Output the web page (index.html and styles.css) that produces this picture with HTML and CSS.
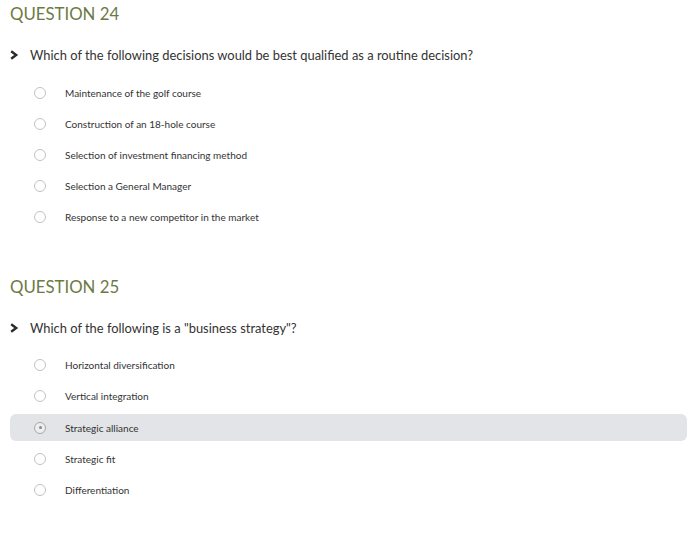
FILE: index.html
```html
<!DOCTYPE html>
<html>
<head>
<meta charset="utf-8">
<link rel="stylesheet" href="styles.css">
</head>
<body>
<div class="page">
  <section class="question">
    <h2 class="q-title">QUESTION 24</h2>
    <div class="q-text">
      <svg class="chev" width="10" height="10" viewBox="0 0 10 10"><path d="M2.2 1.2 L7.2 5 L2.2 8.8" fill="none" stroke="#2b2b2b" stroke-width="2.4" stroke-linejoin="miter"/></svg>
      <span>Which of the following decisions would be best qualified as a routine decision?</span>
    </div>
    <ul class="options">
      <li class="opt"><span class="radio"></span><span class="label">Maintenance of the golf course</span></li>
      <li class="opt"><span class="radio"></span><span class="label">Construction of an 18-hole course</span></li>
      <li class="opt"><span class="radio"></span><span class="label">Selection of investment financing method</span></li>
      <li class="opt"><span class="radio"></span><span class="label">Selection a General Manager</span></li>
      <li class="opt"><span class="radio"></span><span class="label">Response to a new competitor in the market</span></li>
    </ul>
  </section>
  <section class="question q2">
    <h2 class="q-title">QUESTION 25</h2>
    <div class="q-text">
      <svg class="chev" width="10" height="10" viewBox="0 0 10 10"><path d="M2.2 1.2 L7.2 5 L2.2 8.8" fill="none" stroke="#2b2b2b" stroke-width="2.4" stroke-linejoin="miter"/></svg>
      <span>Which of the following is a "business strategy"?</span>
    </div>
    <ul class="options">
      <li class="opt"><span class="radio"></span><span class="label">Horizontal diversification</span></li>
      <li class="opt"><span class="radio"></span><span class="label">Vertical integration</span></li>
      <li class="opt selected"><span class="radio checked"></span><span class="label">Strategic alliance</span></li>
      <li class="opt"><span class="radio"></span><span class="label">Strategic fit</span></li>
      <li class="opt"><span class="radio"></span><span class="label">Differentiation</span></li>
    </ul>
  </section>
</div>
</body>
</html>
```
FILE: styles.css
```css
html, body {
  margin: 0;
  padding: 0;
  background: #ffffff;
}
body {
  font-family: Lato, "Noto Sans", sans-serif;
  color: #333;
}
.page {
  padding: 2px 13px 0 10px;
}
.question {
  display: block;
}
.q2 {
  margin-top: 44px;
}
.q-title {
  margin: 0;
  font-weight: 400;
  font-size: 16.8px;
  line-height: 24px;
  color: #6d7a45;
  letter-spacing: 0;
}
.q-text {
  display: flex;
  align-items: center;
  margin-top: 20px;
  height: 18px;
  font-size: 12.9px;
  color: #333;
}
.chev {
  margin-left: -1px;
  width: 10px;
  height: 10px;
  flex: none;
}
.q-text span {
  margin-left: 11px;
}
.options {
  list-style: none;
  margin: 15px 0 0;
  padding: 0;
}
.opt {
  display: flex;
  align-items: center;
  height: 27px;
  margin-bottom: 4.2px;
  border-radius: 6px;
  padding-left: 24px;
}
.opt.selected {
  background: #e2e4e7;
}
.radio {
  width: 12px;
  height: 12px;
  border: 1px solid #c2c2c2;
  border-radius: 50%;
  box-sizing: border-box;
  background: #fff;
  flex: none;
  position: relative;
}
.radio.checked {
  border-color: #a8a8a8;
  background: #eceef0;
}
.radio.checked::after {
  content: "";
  position: absolute;
  left: 3.5px;
  top: 3.5px;
  width: 3px;
  height: 3px;
  border-radius: 50%;
  background: #8a8a8a;
}
.label {
  margin-left: 19px;
  font-size: 10px;
  color: #333;
}
```
